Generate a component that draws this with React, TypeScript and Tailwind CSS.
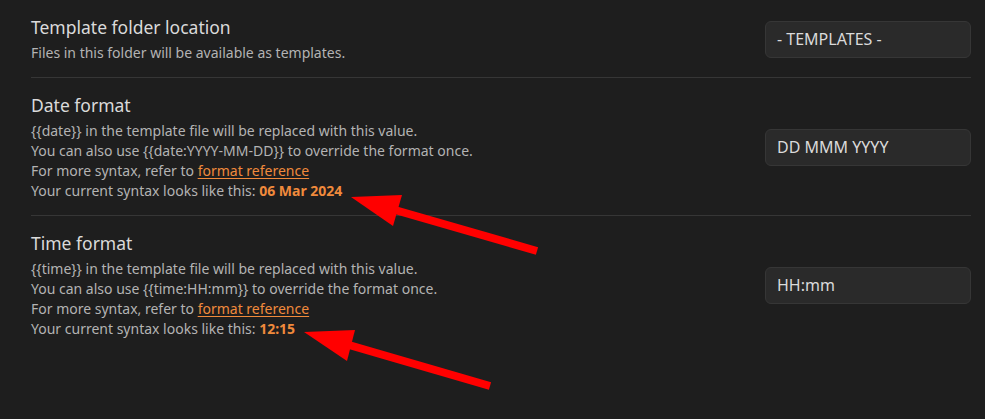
import React from "react";

const font = { fontFamily: '"Noto Sans", "Open Sans", sans-serif' };

function Row({
  title,
  lines,
  value,
  last,
}: {
  title: string;
  lines: React.ReactNode[];
  value: string;
  last?: boolean;
}) {
  return (
    <div
      className={`flex items-center justify-between pt-[15px] pb-[14px] ${
        last ? "" : "border-b border-[#363636]"
      }`}
    >
      <div className="flex flex-col">
        <div className="text-[17.5px] leading-[24px] text-[#dadada]">{title}</div>
        <div className="mt-[4px] flex flex-col text-[14px] leading-[20px] text-[#b3b3b3]">
          {lines.map((l, i) => (
            <div key={i}>{l}</div>
          ))}
        </div>
      </div>
      <div className="flex h-[37px] w-[206px] items-center rounded-[6px] border border-[#363636] bg-[#2a2a2a] px-[11px] text-[16px] text-[#dadada]">
        {value}
      </div>
    </div>
  );
}

const Link = () => (
  <span className="text-[#f08a3c] underline underline-offset-2">format reference</span>
);

export default function App() {
  return (
    <div className="relative h-[419px] w-[985px] overflow-hidden bg-[#1e1e1e]" style={font}>
      <div className="flex flex-col pl-[31px] pr-[14px]">
        <Row
          title="Template folder location"
          lines={["Files in this folder will be available as templates."]}
          value="- TEMPLATES -"
        />
        <Row
          title="Date format"
          lines={[
            "{{date}} in the template file will be replaced with this value.",
            "You can also use {{date:YYYY-MM-DD}} to override the format once.",
            <>
              For more syntax, refer to <Link />
            </>,
            <>
              Your current syntax looks like this:{" "}
              <span className="font-bold text-[#f08a3c]">06 Mar 2024</span>
            </>,
          ]}
          value="DD MMM YYYY"
        />
        <Row
          title="Time format"
          lines={[
            "{{time}} in the template file will be replaced with this value.",
            "You can also use {{time:HH:mm}} to override the format once.",
            <>
              For more syntax, refer to <Link />
            </>,
            <>
              Your current syntax looks like this:{" "}
              <span className="font-bold text-[#f08a3c]">12:15</span>
            </>,
          ]}
          value="HH:mm"
          last
        />
      </div>
      <svg
        className="pointer-events-none absolute left-0 top-0"
        width="985"
        height="419"
        viewBox="0 0 985 419"
      >
        <line x1="537" y1="251" x2="395" y2="210" stroke="#ff0000" strokeWidth="8" />
        <polygon points="351,197 402,195 393,226" fill="#ff0000" />
        <line x1="490" y1="386" x2="349" y2="345" stroke="#ff0000" strokeWidth="8" />
        <polygon points="304,332 355,330 347,361" fill="#ff0000" />
      </svg>
    </div>
  );
}
